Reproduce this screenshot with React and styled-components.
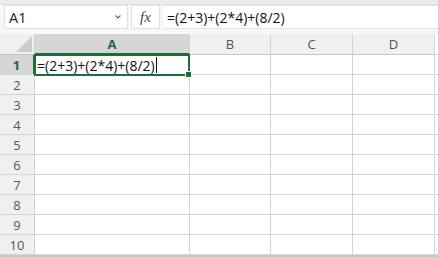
import React from "react";
import styled, { createGlobalStyle } from "styled-components";

const Global = createGlobalStyle`
  html, body { margin: 0; padding: 0; background: #ffffff; }
  body { font-family: "Open Sans", "Liberation Sans", sans-serif; overflow: hidden; }
`;

const Page = styled.div`
  width: 438px;
  height: 257px;
  display: flex;
  flex-direction: column;
  background: #f5f5f5;
  overflow: hidden;
`;

const TopStrip = styled.div`
  height: 5px;
  background: #ececec;
  border-bottom: 1px solid #e2e2e2;
  box-sizing: border-box;
`;

const FormulaBar = styled.div`
  height: 24px;
  display: flex;
  align-items: stretch;
  gap: 3px;
  padding-left: 4px;
  background: #f7f7f7;
`;

const NameBox = styled.div`
  width: 124px;
  display: flex;
  align-items: center;
  justify-content: space-between;
  padding: 0 5px 0 4px;
  box-sizing: border-box;
  background: #ffffff;
  border: 1px solid #e0e0e0;
  font-size: 14.5px;
  color: #222;
`;

const FxBox = styled.div`
  width: 29px;
  display: flex;
  align-items: center;
  justify-content: center;
  background: #ffffff;
  border: 1px solid #e0e0e0;
  box-sizing: border-box;
  font-family: "Liberation Serif", serif;
  font-style: italic;
  font-size: 15px;
  color: #444;
`;

const FormulaInput = styled.div`
  flex: 1;
  display: flex;
  align-items: center;
  padding-left: 4px;
  background: #ffffff;
  border-top: 1px solid #e4e4e4;
  border-bottom: 1px solid #e4e4e4;
  font-size: 14px;
  color: #111;
`;

const Spacer = styled.div`
  height: 5px;
  background: #f7f7f7;
`;

const Grid = styled.div`
  display: grid;
  grid-template-columns: 35px 155px 81px 82px 82px 3px;
  grid-template-rows: 21px repeat(10, 20px);
  background: #ffffff;
  border-bottom: 2px solid #c8c8c8;
`;

const Corner = styled.div`
  position: relative;
  background: #f0f0f0;
  border-right: 1px solid #d0d0d0;
  border-bottom: 1px solid #c6c6c6;
  box-sizing: border-box;
  overflow: hidden;
  &::after {
    content: "";
    position: absolute;
    right: 2px;
    bottom: 2px;
    width: 0;
    height: 0;
    border-left: 16px solid transparent;
    border-bottom: 16px solid #cdcdcd;
  }
`;

const ColHeader = styled.div`
  display: flex;
  align-items: center;
  justify-content: center;
  box-sizing: border-box;
  background: ${(p) => (p.$active ? "#d6d6d6" : "#f0f0f0")};
  border-right: 1px solid #d4d4d4;
  border-bottom: ${(p) => (p.$active ? "2px solid #1e6b3c" : "1px solid #c6c6c6")};
  color: ${(p) => (p.$active ? "#1e6b3c" : "#555")};
  font-weight: ${(p) => (p.$active ? 700 : 400)};
  font-size: 13px;
`;

const RowHeader = styled.div`
  display: flex;
  align-items: center;
  justify-content: center;
  box-sizing: border-box;
  background: ${(p) => (p.$active ? "#d6d6d6" : "#f0f0f0")};
  border-right: ${(p) => (p.$active ? "2px solid #1e6b3c" : "1px solid #d0d0d0")};
  border-bottom: 1px solid #d4d4d4;
  color: ${(p) => (p.$active ? "#1e6b3c" : "#555")};
  font-weight: ${(p) => (p.$active ? 700 : 400)};
  font-size: 13px;
`;

const Cell = styled.div`
  box-sizing: border-box;
  border-right: 1px solid #d4d4d4;
  border-bottom: 1px solid #d4d4d4;
`;

const Edge = styled.div`
  border-bottom: 1px solid #d4d4d4;
  box-sizing: border-box;
`;

const ActiveCell = styled.div`
  position: relative;
  box-sizing: border-box;
  border: 2px solid #1e6b3c;
  margin: -1px 0 -1px -1px;
  display: flex;
  align-items: center;
  padding-left: 1px;
  font-size: 14px;
  color: #111;
  white-space: nowrap;
  &::after {
    content: "";
    position: absolute;
    right: -4px;
    bottom: -4px;
    width: 5px;
    height: 5px;
    background: #1e6b3c;
    border: 1px solid #ffffff;
  }
`;

const Caret = styled.span`
  display: inline-block;
  width: 1px;
  height: 16px;
  background: #111;
  margin-left: 1px;
`;

const Chevron = () => (
  <svg width="8" height="6" viewBox="0 0 8 6" fill="none">
    <path d="M1.5 1.5 L4 4 L6.5 1.5" stroke="#666" strokeWidth="1.1" />
  </svg>
);

const cols = ["A", "B", "C", "D"];
const rows = [1, 2, 3, 4, 5, 6, 7, 8, 9, 10];
const formula = "=(2+3)+(2*4)+(8/2)";

export default function App() {
  return (
    <>
      <Global />
      <Page>
        <TopStrip />
        <FormulaBar>
          <NameBox>
            <span>A1</span>
            <Chevron />
          </NameBox>
          <FxBox>fx</FxBox>
          <FormulaInput>{formula}</FormulaInput>
        </FormulaBar>
        <Spacer />
        <Grid>
          <Corner />
          {cols.map((c) => (
            <ColHeader key={c} $active={c === "A"}>
              {c}
            </ColHeader>
          ))}
          <Edge />
          {rows.map((r) => (
            <React.Fragment key={r}>
              <RowHeader $active={r === 1}>{r}</RowHeader>
              {cols.map((c) =>
                r === 1 && c === "A" ? (
                  <ActiveCell key={c}>
                    {formula}
                    <Caret />
                  </ActiveCell>
                ) : (
                  <Cell key={c} />
                )
              )}
              <Edge />
            </React.Fragment>
          ))}
        </Grid>
      </Page>
    </>
  );
}
